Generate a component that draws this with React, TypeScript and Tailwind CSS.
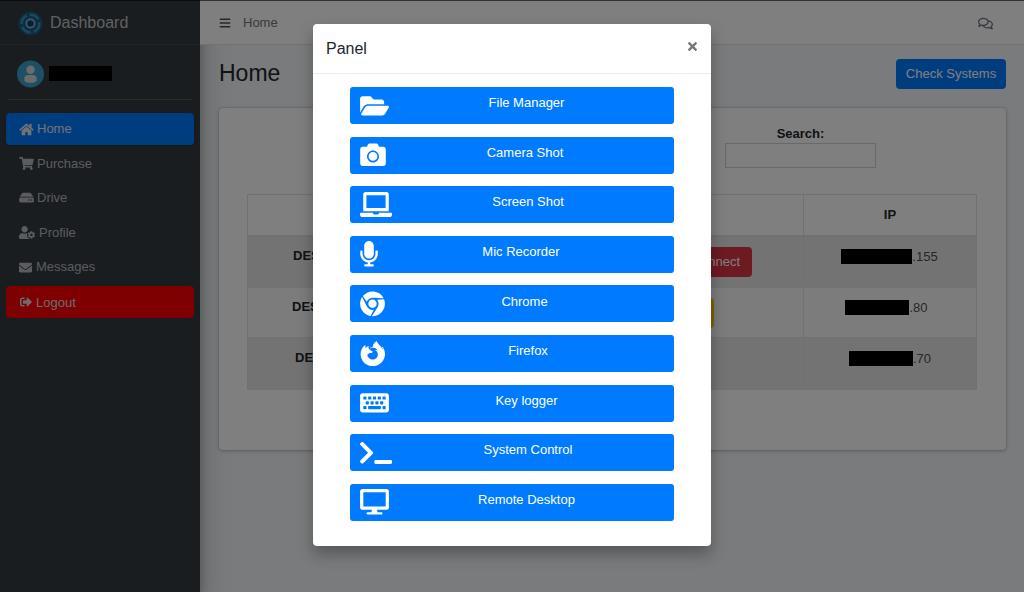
import type { IconType } from "react-icons";
import {
  FaBars,
  FaCamera,
  FaChrome,
  FaDesktop,
  FaEnvelope,
  FaFirefoxBrowser,
  FaFolderOpen,
  FaHdd,
  FaHome,
  FaKeyboard,
  FaLaptop,
  FaMicrophone,
  FaRegComments,
  FaShoppingCart,
  FaSignOutAlt,
  FaTerminal,
  FaTimes,
  FaUserCog,
} from "react-icons/fa";

const navItems: { label: string; icon: IconType; iconClass: string; textClass: string }[] = [
  { label: "Purchase", icon: FaShoppingCart, iconClass: "w-[15px] h-[13px]", textClass: "ml-[3px]" },
  { label: "Drive", icon: FaHdd, iconClass: "w-[15px] h-[13px]", textClass: "ml-[3px]" },
  { label: "Profile", icon: FaUserCog, iconClass: "w-[16px] h-[13px]", textClass: "ml-[4px]" },
  { label: "Messages", icon: FaEnvelope, iconClass: "w-[13px] h-[13px]", textClass: "ml-[4px]" },
];

const tools: { label: string; icon: IconType; width: string; iconClass: string }[] = [
  { label: "File Manager", icon: FaFolderOpen, width: "w-[29px]", iconClass: "w-full h-[25.6px]" },
  { label: "Camera Shot", icon: FaCamera, width: "w-[26px]", iconClass: "w-full h-[25.6px]" },
  { label: "Screen Shot", icon: FaLaptop, width: "w-[32px]", iconClass: "w-full h-[25.6px]" },
  { label: "Mic Recorder", icon: FaMicrophone, width: "w-[18px]", iconClass: "w-full h-[25.6px]" },
  { label: "Chrome", icon: FaChrome, width: "w-[25px]", iconClass: "w-full h-[25.6px]" },
  { label: "Firefox", icon: FaFirefoxBrowser, width: "w-[32px]", iconClass: "w-[25.6px] h-[25.6px]" },
  { label: "Key logger", icon: FaKeyboard, width: "w-[29px]", iconClass: "w-full h-[25.6px]" },
  { label: "System Control", icon: FaTerminal, width: "w-[32px]", iconClass: "w-full h-[25.6px]" },
  { label: "Remote Desktop", icon: FaDesktop, width: "w-[29px]", iconClass: "w-full h-[25.6px]" },
];

const rows = [
  { name: "DESKTOP-7HQ2KVM", nameClass: "pl-[45px]", button: "Disconnect", buttonClass: "bg-[#dc3545] text-white mr-[51px]", mask: "w-[71px]", ip: ".155", ipClass: "pr-[1px]", bg: "bg-[#e6e6e6]", h: "h-[52px]" },
  { name: "DESKTOP-2MN8RTX", nameClass: "pl-[44px]", button: "Connect", buttonClass: "bg-[#ffc107] text-[#1f2d3d] mr-[89px]", mask: "w-[64px]", ip: ".80", ipClass: "pr-[7px]", bg: "bg-[#f9f9f9]", h: "h-[50px]" },
  { name: "DESKTOP-9PL4WZC", nameClass: "pl-[47px]", button: "Connect", buttonClass: "bg-[#28a745] text-white mr-[93px]", mask: "w-[64px]", ip: ".70", ipClass: "pr-0", bg: "bg-[#e6e6e6]", h: "h-[52px]" },
];

function Logo() {
  return (
    <svg viewBox="0 0 24 24" className="h-[25px] w-[25px] shrink-0">
      <circle cx="12" cy="12" r="11.5" fill="#1a5a80" />
      <circle cx="12" cy="12" r="8.5" fill="none" stroke="#3f8fb8" strokeWidth="2.4" strokeDasharray="10 3" />
      <circle cx="12" cy="12" r="4" fill="#16405c" stroke="#7dbbdc" strokeWidth="1.6" />
    </svg>
  );
}

function Avatar() {
  return (
    <svg viewBox="0 0 28 28" className="h-[28px] w-[27px] shrink-0">
      <circle cx="14" cy="14" r="14" fill="#3c9ecb" />
      <circle cx="14" cy="9.5" r="4.4" fill="#d2d6da" />
      <rect x="7.5" y="15" width="13" height="8" rx="4" fill="#d2d6da" />
    </svg>
  );
}

export default function App() {
  return (
    <div className="relative flex h-[592px] w-[1024px] overflow-hidden bg-[#f4f6f9] font-['Liberation_Sans',Arial,sans-serif] text-[13px] text-[#212529]">
      <aside className="flex w-[200px] shrink-0 flex-col bg-[#343a40] shadow-[0_14px_28px_rgba(0,0,0,0.25),0_10px_10px_rgba(0,0,0,0.22)]">
        <div className="flex h-[45px] items-center gap-[7px] border-b border-[#3e454c] pl-[18px] pt-[2px]">
          <Logo />
          <span className="text-[16px] text-white/70">Dashboard</span>
        </div>
        <div className="mx-2 flex h-[55px] items-center gap-[5px] border-b border-[#4f5962] pt-[3px] pl-[9px]">
          <Avatar />
          <div className="h-[15px] w-[63px] bg-black" />
        </div>
        <nav className="mt-[13px] flex flex-col px-[6px]">
          <a className="flex h-[32px] items-center rounded-[4px] bg-[#007bff] pl-[13px] text-[#e6e6e6] shadow-[0_1px_3px_rgba(0,0,0,0.2)]">
            <FaHome className="mr-[3px] h-[13px] w-[15px]" />
            Home
          </a>
          <div className="flex flex-col pt-[1px]">
            {navItems.map((item) => (
              <a key={item.label} className="flex h-[34.6px] items-center pl-[13px] text-[#b4b9c2]">
                <item.icon className={item.iconClass} />
                <span className={item.textClass}>{item.label}</span>
              </a>
            ))}
          </div>
          <a className="mt-[2px] flex h-[32px] items-center rounded-[4px] bg-[#ff0000] pl-[14px] text-[#d8d8d8]">
            <FaSignOutAlt className="mr-[4px] h-[12px] w-[12px]" />
            Logout
          </a>
        </nav>
      </aside>

      <div className="flex min-w-0 flex-1 flex-col">
        <header className="flex h-[45px] shrink-0 items-center border-b border-[#dee2e6] bg-white pl-[19px] pr-[31px] pt-[2px] text-[#6c757d]">
          <FaBars className="text-[12px] text-[#495057]" />
          <span className="ml-[12px]">Home</span>
          <FaRegComments className="ml-auto text-[15px] text-[#6c757d]" />
        </header>
        <main className="flex flex-col pl-[19px] pr-[18px] pt-[14px]">
          <div className="flex h-[30px] items-center justify-between">
            <h1 className="pb-[2px] text-[23px]">Home</h1>
            <button className="h-[30px] w-[110px] rounded-[4px] bg-[#007bff] text-white">Check Systems</button>
          </div>
          <section className="mt-[19px] h-[342px] rounded-[4px] bg-white px-[28px] pt-[18px] shadow-[0_0_2px_rgba(0,0,0,0.25),0_1px_4px_rgba(0,0,0,0.2)]">
            <div className="flex flex-col items-center pl-[376px] font-bold">
              <span className="h-[17px] leading-[16px]">Search:</span>
              <div className="h-[25px] w-[151px] border border-[#ced4da] bg-white" />
            </div>
            <table className="mt-[26px] w-[729px] table-fixed border-collapse">
              <colgroup>
                <col className="w-[556px]" />
                <col className="w-[173px]" />
              </colgroup>
              <thead>
                <tr className="h-[41px] border-b-2 border-[#dee2e6]">
                  <th className="border border-[#dee2e6]" />
                  <th className="border border-[#dee2e6]">IP</th>
                </tr>
              </thead>
              <tbody>
                {rows.map((row) => (
                  <tr key={row.ip} className={`${row.bg} ${row.h}`}>
                    <td className="border border-[#dee2e6] p-0">
                      <div className="flex items-center justify-between">
                        <b className={`pb-[12px] ${row.nameClass}`}>{row.name}</b>
                        <button className={`h-[30px] rounded-[4px] px-3 ${row.buttonClass}`}>{row.button}</button>
                      </div>
                    </td>
                    <td className="border border-[#dee2e6] p-0 pb-[10px] text-center text-[#495057]">
                      <div className={row.ipClass}>
                        <span className={`inline-block h-[15px] align-[-3px] bg-black ${row.mask}`} />
                        {row.ip}
                      </div>
                    </td>
                  </tr>
                ))}
              </tbody>
            </table>
          </section>
        </main>
      </div>

      <div className="absolute inset-0 border-t border-black/60 bg-black/50" />

      <div className="absolute left-[313px] top-[24px] flex h-[522px] w-[398px] flex-col rounded-[4px] bg-white shadow-[0_8px_16px_rgba(0,0,0,0.3)]">
        <div className="flex h-[50px] shrink-0 items-center justify-between border-b border-[#e9ecef] pl-[13px] pr-[12px]">
          <h2 className="text-[16px]">Panel</h2>
          <FaTimes className="mb-[5px] text-[13px] text-[#777777]" />
        </div>
        <div className="flex flex-col gap-[12.6px] px-[37px] pt-[13px]">
          {tools.map((tool) => (
            <button key={tool.label} className="flex h-[37px] items-center rounded-[3px] bg-[#007bff] px-[10px] text-white">
              <span className={`${tool.width} flex shrink-0 items-center`}>
                <tool.icon className={tool.iconClass} />
              </span>
              <span className="flex-1 pb-[5px] text-center">{tool.label}</span>
            </button>
          ))}
        </div>
      </div>
    </div>
  );
}
